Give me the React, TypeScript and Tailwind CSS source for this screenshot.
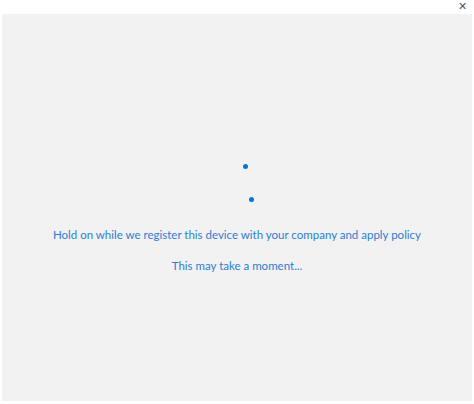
import React from 'react';

export default function App() {
  return (
    <div className="w-[474px] h-[404px] bg-white flex flex-col overflow-hidden font-['Lato',sans-serif]">
      <div className="h-[14px] relative">
        <span className="absolute right-[7px] top-0 text-[11px] leading-none text-[#555]">✕</span>
      </div>
      <div className="mx-[2px] mb-[3px] flex-1 bg-[#f2f2f2] flex flex-col items-center">
        <div className="relative w-full h-[215px]">
          <span className="absolute left-[241px] top-[150px] w-[5px] h-[5px] rounded-full bg-[#0078d4]" />
          <span className="absolute left-[247px] top-[183px] w-[5px] h-[5px] rounded-full bg-[#0078d4]" />
        </div>
        <p className="text-[11.5px] text-[#2e7dd1] leading-none">Hold on while we register this device with your company and apply policy</p>
        <p className="mt-[19px] text-[11.5px] text-[#2e7dd1] leading-none">This may take a moment...</p>
      </div>
    </div>
  );
}
